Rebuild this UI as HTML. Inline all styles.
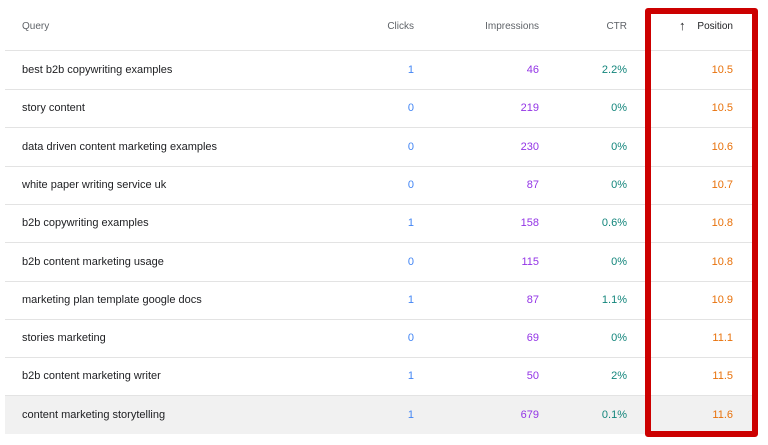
<!DOCTYPE html>
<html><head><style>
body{margin:0;width:768px;height:445px;background:#fff;font-family:"Liberation Sans",Arial,sans-serif;position:relative;overflow:hidden}
.h{position:absolute;top:21px;font-size:10px;line-height:12px;color:#5f6368}
.row{position:absolute;left:5px;width:747px;height:38px;border-bottom:1px solid #e3e3e3}
.row span{position:absolute;top:13px;font-size:11px;line-height:12px}
.q{left:17px;color:#202124}
.c{right:338px;color:#4285f4;text-align:right}
.i{right:213px;color:#9334e6;text-align:right}
.t{right:125px;color:#12857b;text-align:right}
.p{right:19px;color:#e8710a;text-align:right}
</style></head><body>
<div class="h" style="left:22px">Query</div>
<div class="h" style="right:354px">Clicks</div>
<div class="h" style="right:229px">Impressions</div>
<div class="h" style="right:141px">CTR</div>
<div class="h" style="right:35px;color:#202124">Position</div>
<div style="position:absolute;left:679px;top:18px;font-size:13px;line-height:16px;font-weight:bold;color:#202124">&#8593;</div>
<div style="position:absolute;left:5px;top:50px;width:747px;border-top:1px solid #e3e3e3"></div>
<div class="row" style="top:51px"><span class="q">best b2b copywriting examples</span><span class="c">1</span><span class="i">46</span><span class="t">2.2%</span><span class="p">10.5</span></div>
<div class="row" style="top:89.3px"><span class="q">story content</span><span class="c">0</span><span class="i">219</span><span class="t">0%</span><span class="p">10.5</span></div>
<div class="row" style="top:127.6px"><span class="q">data driven content marketing examples</span><span class="c">0</span><span class="i">230</span><span class="t">0%</span><span class="p">10.6</span></div>
<div class="row" style="top:165.9px"><span class="q">white paper writing service uk</span><span class="c">0</span><span class="i">87</span><span class="t">0%</span><span class="p">10.7</span></div>
<div class="row" style="top:204.2px"><span class="q">b2b copywriting examples</span><span class="c">1</span><span class="i">158</span><span class="t">0.6%</span><span class="p">10.8</span></div>
<div class="row" style="top:242.5px"><span class="q">b2b content marketing usage</span><span class="c">0</span><span class="i">115</span><span class="t">0%</span><span class="p">10.8</span></div>
<div class="row" style="top:280.8px"><span class="q">marketing plan template google docs</span><span class="c">1</span><span class="i">87</span><span class="t">1.1%</span><span class="p">10.9</span></div>
<div class="row" style="top:319.1px"><span class="q">stories marketing</span><span class="c">0</span><span class="i">69</span><span class="t">0%</span><span class="p">11.1</span></div>
<div class="row" style="top:357.4px"><span class="q">b2b content marketing writer</span><span class="c">1</span><span class="i">50</span><span class="t">2%</span><span class="p">11.5</span></div>
<div class="row" style="top:395.7px;background:#f1f1f1;border-bottom:none"><span class="q">content marketing storytelling</span><span class="c">1</span><span class="i">679</span><span class="t">0.1%</span><span class="p">11.6</span></div>
<div style="position:absolute;left:645px;top:8px;width:101px;height:417px;border:6px solid #cc0000;border-radius:3px"></div>
</body></html>
